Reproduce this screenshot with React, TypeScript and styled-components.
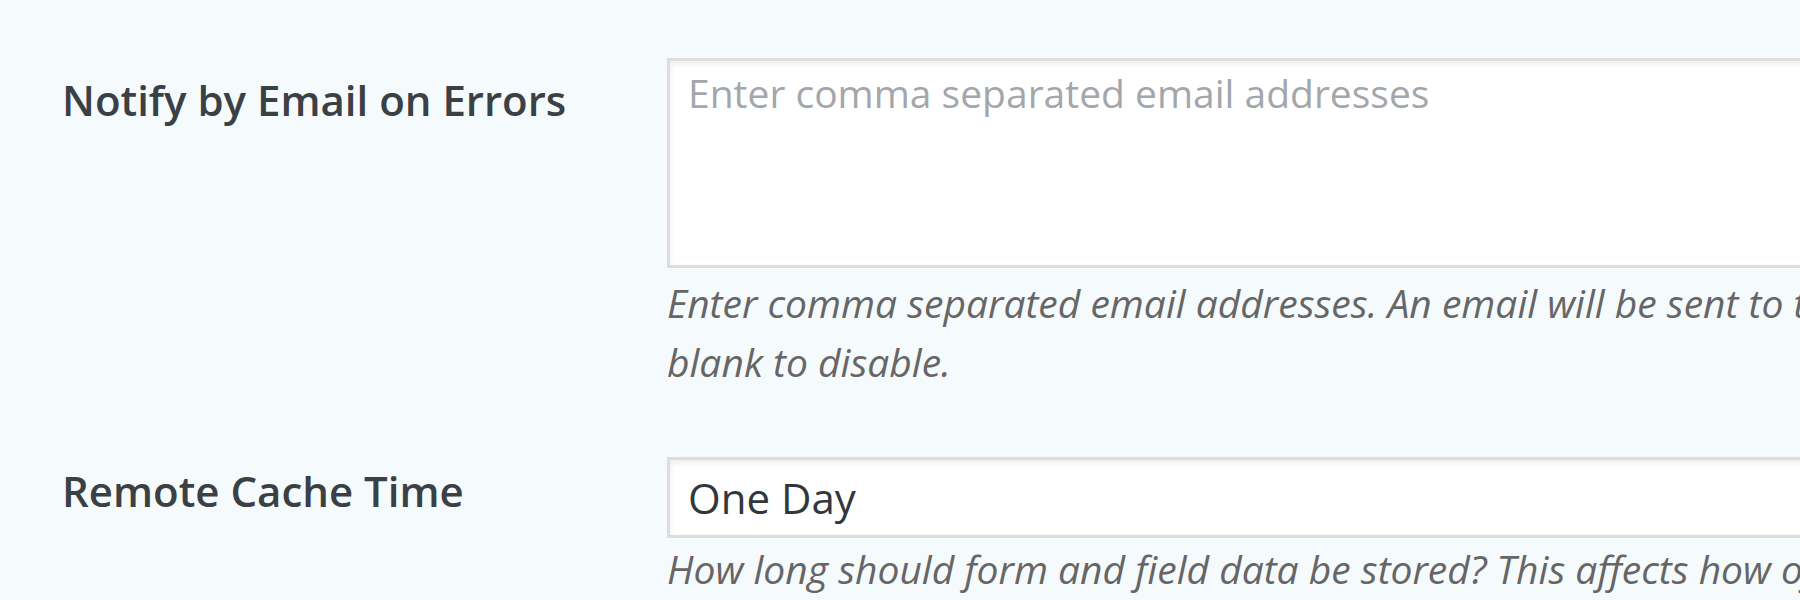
import styled, { createGlobalStyle } from 'styled-components';

const GlobalStyle = createGlobalStyle`
  html, body {
    margin: 0;
    padding: 0;
    overflow: hidden;
    background: #f5fafd;
  }
  body {
    font-family: 'Open Sans', 'Noto Sans', sans-serif;
    color: #32373c;
  }
`;

const Page = styled('div')`
  width: 1800px;
  height: 600px;
  overflow: hidden;
  padding: 58px 0 0 62px;
  box-sizing: border-box;
`;

const FormTable = styled('div')`
  display: flex;
  flex-direction: column;
  gap: 66px;
  width: 3400px;
`;

const Row = styled('div')`
  display: grid;
  grid-template-columns: 605px 2700px;
`;

const Label = styled('label')<{ offset: number }>`
  margin-top: ${(p) => p.offset}px;
  font-size: 42px;
  line-height: 1.3;
  font-weight: 600;
  color: #3b4045;
`;

const Field = styled('div')`
  display: flex;
  flex-direction: column;
`;

const TextArea = styled('textarea')`
  box-sizing: border-box;
  width: 1500px;
  height: 210px;
  margin: 0;
  padding: 5px 18px;
  border: 3px solid #dddddd;
  border-radius: 0;
  background: #ffffff;
  box-shadow: inset 0 3px 6px rgba(0, 0, 0, 0.07);
  font-family: 'Open Sans', 'Noto Sans', sans-serif;
  font-size: 39px;
  line-height: 1.4;
  color: #32373c;
  resize: none;
  outline: none;

  &::placeholder {
    color: #a3a7ab;
    opacity: 1;
  }
`;

const Select = styled('select')`
  box-sizing: border-box;
  width: 1500px;
  height: 81px;
  margin: 0;
  padding: 0 18px;
  border: 3px solid #dddddd;
  border-radius: 0;
  background: #ffffff;
  box-shadow: inset 0 3px 6px rgba(0, 0, 0, 0.07);
  appearance: none;
  font-family: 'Open Sans', 'Noto Sans', sans-serif;
  font-size: 42px;
  color: #32373c;
  outline: none;
`;

const Description = styled('p')<{ shift: number }>`
  margin: ${(p) => p.shift}px 0 0;
  font-size: 39px;
  line-height: 58.5px;
  font-style: italic;
  color: #666666;
  white-space: nowrap;
`;

export default function App() {
  return (
    <>
      <GlobalStyle />
      <Page>
        <FormTable>
          <Row>
            <Label offset={15} htmlFor='notify-emails'>
              Notify by Email on Errors
            </Label>
            <Field>
              <TextArea
                id='notify-emails'
                placeholder='Enter comma separated email addresses'
              />
              <Description shift={6}>
                Enter comma separated email addresses. An email will be sent to these
                addresses when a sync fails. Leave
                <br />
                blank to disable.
              </Description>
            </Field>
          </Row>
          <Row>
            <Label offset={7} htmlFor='cache-time'>
              Remote Cache Time
            </Label>
            <Field>
              <Select id='cache-time' defaultValue='day'>
                <option value='hour'>One Hour</option>
                <option value='day'>One Day</option>
                <option value='week'>One Week</option>
              </Select>
              <Description shift={2}>
                How long should form and field data be stored? This affects how often
                remote data is refreshed.
              </Description>
            </Field>
          </Row>
        </FormTable>
      </Page>
    </>
  );
}
